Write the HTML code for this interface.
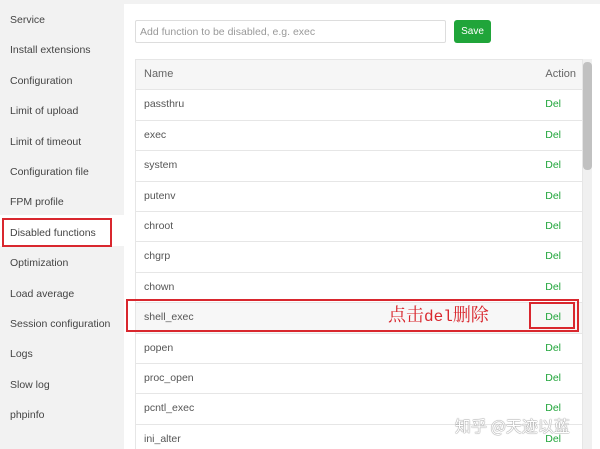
<!DOCTYPE html>
<html><head><meta charset="utf-8"><style>
*{margin:0;padding:0;box-sizing:border-box}
body{width:600px;height:449px;overflow:hidden;background:#fff;font-family:"Liberation Sans","Noto Sans CJK SC",sans-serif;position:relative;color:#555}
.side{position:absolute;left:0;top:0;width:124px;height:449px;background:#f2f2f2}
.si{position:absolute;left:10px;font-size:10.5px;color:#444}
.top{position:absolute;left:124px;top:0;width:476px;height:4px;background:#f2f2f2}
.inp{position:absolute;left:135px;top:20px;width:311px;height:23px;border:1px solid #ddd;border-radius:2px;font-size:10.5px;color:#999;padding:5px 4px}
.save{position:absolute;left:454px;top:20px;width:37px;height:23px;background:#20a53a;border-radius:3px;color:#fff;font-size:10px;text-align:center;line-height:23px}
.tbl{position:absolute;left:135px;top:59px;width:448px;height:390px;border:1px solid #e6e6e6;border-bottom:none;overflow:hidden}
.row{position:absolute;left:0;width:448px;height:30.4px;border-bottom:1px solid #e6e6e6;font-size:10.5px;line-height:28px}
.row .n{position:absolute;left:8px;color:#555}
.row .d{position:absolute;right:23px;color:#20a53a}
.hd{background:#f6f6f6}
.hd .n{color:#666;font-size:11px}
.hd .d{color:#666;font-size:11px;right:8px}
.sb{position:absolute;left:583px;top:59px;width:9px;height:390px;background:#f0f0f0}
.th{position:absolute;left:583px;top:62px;width:9px;height:108px;background:#c1c1c1;border-radius:4px}
.box{position:absolute;border:2px solid #d9272e}
</style></head><body>
<div class="side"></div>
<div style="position:absolute;left:0;top:215px;width:124px;height:31px;background:#fff"></div>
<div class="si" style="top:14px">Service</div>
<div class="si" style="top:44px">Install extensions</div>
<div class="si" style="top:75px">Configuration</div>
<div class="si" style="top:105px">Limit of upload</div>
<div class="si" style="top:136px">Limit of timeout</div>
<div class="si" style="top:166px">Configuration file</div>
<div class="si" style="top:196px">FPM profile</div>
<div class="si" style="top:227px">Disabled functions</div>
<div class="si" style="top:257px">Optimization</div>
<div class="si" style="top:288px">Load average</div>
<div class="si" style="top:318px">Session configuration</div>
<div class="si" style="top:348px">Logs</div>
<div class="si" style="top:379px">Slow log</div>
<div class="si" style="top:409px">phpinfo</div>
<div class="top"></div>
<div class="inp">Add function to be disabled, e.g. exec</div>
<div class="save">Save</div>
<div class="tbl">
<div class="row hd" style="top:0"><span class="n">Name</span><span class="d">Action</span></div>
<div class="row" style="top:30.4px"><span class="n">passthru</span><span class="d">Del</span></div>
<div class="row" style="top:60.8px"><span class="n">exec</span><span class="d">Del</span></div>
<div class="row" style="top:91.2px"><span class="n">system</span><span class="d">Del</span></div>
<div class="row" style="top:121.6px"><span class="n">putenv</span><span class="d">Del</span></div>
<div class="row" style="top:152px"><span class="n">chroot</span><span class="d">Del</span></div>
<div class="row" style="top:182.4px"><span class="n">chgrp</span><span class="d">Del</span></div>
<div class="row" style="top:212.8px"><span class="n">chown</span><span class="d">Del</span></div>
<div class="row" style="top:243.2px;background:#f7f7f7"><span class="n">shell_exec</span><span class="d">Del</span></div>
<div class="row" style="top:273.6px"><span class="n">popen</span><span class="d">Del</span></div>
<div class="row" style="top:304px"><span class="n">proc_open</span><span class="d">Del</span></div>
<div class="row" style="top:334.4px"><span class="n">pcntl_exec</span><span class="d">Del</span></div>
<div class="row" style="top:364.8px"><span class="n">ini_alter</span><span class="d">Del</span></div>
</div>
<div class="sb"></div><div class="th"></div>
<div class="box" style="left:2px;top:218px;width:110px;height:29px"></div>
<div class="box" style="left:126px;top:299px;width:453px;height:33px"></div>
<div class="box" style="left:529px;top:302px;width:46px;height:27px"></div>
<div style="position:absolute;left:388px;top:303px;font-size:18px;line-height:22px;color:#d9272e;font-family:'Noto Serif CJK SC',serif;white-space:nowrap">点击<span style="font-family:'Liberation Mono',monospace;font-size:16px">del</span>删除</div>
<div style="position:absolute;left:455px;top:413px;font-size:16px;color:#fff;text-shadow:0 0 1px #777,0 0 1px #777;font-family:'Noto Sans CJK SC',sans-serif;white-space:nowrap">知乎 @天迹以蓝</div>
</body></html>
